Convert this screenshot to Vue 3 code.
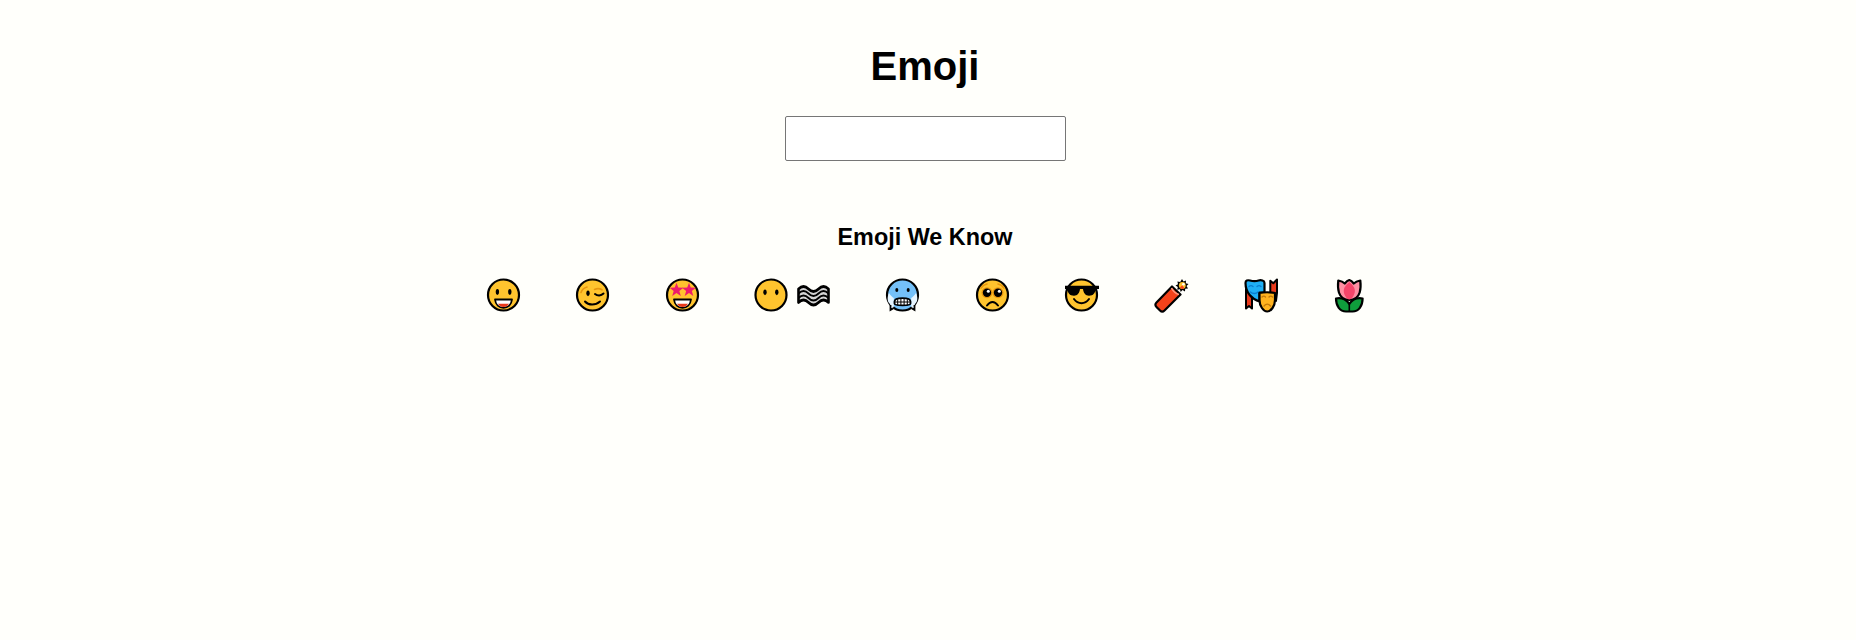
<script setup>
const title = 'Emoji'
const subtitle = 'Emoji We Know'
const star = '0,-7.3 1.76,-2.43 6.94,-2.26 2.85,.93 4.29,5.9 0,3 -4.29,5.9 -2.85,.93 -6.94,-2.26 -1.76,-2.43'
const wave = y => `M1.5 ${y} q5 -5 10 0 t10 0 t10 0`
</script>

<template>
  <div class="page">
    <h1>{{ title }}</h1>
    <input class="search" type="text" />
    <h2>{{ subtitle }}</h2>
    <ul class="emoji-list">
      <!-- grinning -->
      <li>
        <svg viewBox="0 0 34 34" class="icon">
          <circle cx="16.5" cy="16" r="15.5" fill="#ffc42e" stroke="#000" stroke-width="2.200" />
          <ellipse cx="10.400" cy="13" rx="1.700" ry="2.900" />
          <ellipse cx="22.800" cy="13" rx="1.700" ry="2.900" />
          <path d="M8 20.500h17c-.6 5.200-4 8.300-8.500 8.300S8.600 25.700 8 20.500z" fill="#fff" stroke="#000" stroke-width="1.800" stroke-linejoin="round" />
          <path d="M11 24.800h11c-1.300 2.200-3.200 3.200-5.500 3.200s-4.200-1-5.500-3.200z" fill="#ea3a1b" />
        </svg>
      </li>
      <!-- winking -->
      <li>
        <svg viewBox="0 0 34 34" class="icon">
          <circle cx="16.500" cy="16" r="15.500" fill="#ffc42e" stroke="#000" stroke-width="2.200" />
          <path d="M5 13.500c.8-2.500 3-4.700 6-5.500M18.500 10.500c2.500-1.200 5-1.200 7.500.3" fill="none" stroke="#e8960f" stroke-width="1.600" stroke-linecap="round" />
          <ellipse cx="12" cy="14.300" rx="1.700" ry="2.900" />
          <path d="M19 15c2.500 2 6 2 8.500-.5" fill="none" stroke="#000" stroke-width="2" stroke-linecap="round" />
          <path d="M9 22.500c3.500 4 10.500 4 15 0" fill="none" stroke="#000" stroke-width="2" stroke-linecap="round" />
        </svg>
      </li>
      <!-- star struck -->
      <li>
        <svg viewBox="0 0 34 34" class="icon">
          <circle cx="16.500" cy="16" r="15.500" fill="#ffc42e" stroke="#000" stroke-width="2.200" />
          <polygon :points="star" transform="translate(10.500 11)" fill="#ee1b6b" />
          <polygon :points="star" transform="translate(23 11)" fill="#ee1b6b" />
          <path d="M8 20.500h17c-.6 5.200-4 8.300-8.500 8.300S8.600 25.700 8 20.500z" fill="#fff" stroke="#000" stroke-width="1.800" stroke-linejoin="round" />
          <path d="M11 24.800h11c-1.300 2.200-3.200 3.200-5.500 3.200s-4.200-1-5.500-3.200z" fill="#ea3a1b" />
        </svg>
      </li>
      <!-- no mouth + fog -->
      <li class="pair">
        <svg viewBox="0 0 34 34" class="icon">
          <circle cx="16" cy="16" r="15.500" fill="#ffc42e" stroke="#000" stroke-width="2.200" />
          <ellipse cx="10" cy="13.300" rx="1.700" ry="2.900" />
          <ellipse cx="21.800" cy="13.300" rx="1.700" ry="2.900" />
        </svg>
        <svg viewBox="0 0 34 34" class="icon fog">
          <path d="M1.500 10q5-5 10 0t10 0t10 0V23.500q-5-5-10 0t-10 0t-10 0z" fill="#d4d4d4" stroke="#000" stroke-width="2.600" stroke-linejoin="round" />
          <path :d="wave(14.500)" fill="none" stroke="#000" stroke-width="1.800" />
          <path :d="wave(19)" fill="none" stroke="#000" stroke-width="1.800" />
        </svg>
      </li>
      <!-- cold face -->
      <li>
        <svg viewBox="0 0 34 34" class="icon">
          <circle cx="16.500" cy="16" r="15.500" fill="#74c0f8" stroke="#000" stroke-width="2.200" />
          <path d="M3 14c-2 4-1.800 9 1 11l1.300 4.500L7.800 28V19c-1.500-1-3.300-2.500-4.800-5zM30 14c2 4 1.800 9-1 11l-1.300 4.500L25.200 28V19c1.500-1 3.300-2.500 4.800-5z" fill="#e6f5ff" />
          <ellipse cx="10.800" cy="11" rx="1.500" ry="2" />
          <ellipse cx="22.200" cy="11" rx="1.500" ry="2" />
          <path d="M8.500 22.500c0-4.500 16-4.500 16 0v2c0 2.500-16 2.500-16 0z" fill="#fff" stroke="#000" stroke-width="1.800" />
          <path d="M11.700 20v6.500M14.900 19.500v7.500M18.100 19.500v7.500M21.300 20v6.500M8.500 23h16" stroke="#000" stroke-width="1" />
          <path d="M4.500 26v5l2.500-1.500M28.500 26v5L26 29.500" fill="none" stroke="#000" stroke-width="1.800" />
        </svg>
      </li>
      <!-- pleading -->
      <li>
        <svg viewBox="0 0 34 34" class="icon">
          <circle cx="16.500" cy="16" r="15.500" fill="#ffc42e" stroke="#000" stroke-width="2.200" />
          <path d="M5 9c1.500-2.300 3.500-3.500 6-4M22 5c2.500.5 4.500 1.700 6 4" fill="none" stroke="#e8960f" stroke-width="1.600" stroke-linecap="round" />
          <circle cx="11" cy="13.700" r="5.500" fill="#e8960f" />
          <circle cx="22" cy="13.700" r="5.500" fill="#e8960f" />
          <circle cx="11" cy="13.700" r="4.200" />
          <circle cx="22" cy="13.700" r="4.200" />
          <circle cx="12.300" cy="12.300" r="1.500" fill="#fff" />
          <circle cx="23.300" cy="12.300" r="1.500" fill="#fff" />
          <path d="M11 26.500c3.500-4.600 7.500-4.600 11 0" fill="none" stroke="#000" stroke-width="2" stroke-linecap="round" />
        </svg>
      </li>
      <!-- sunglasses -->
      <li>
        <svg viewBox="0 0 34 34" class="icon">
          <circle cx="16.500" cy="16" r="15.500" fill="#ffc42e" stroke="#000" stroke-width="2.200" />
          <path d="M0 6.700h34V10h-3.500c-.3 4-2 6.700-6.500 6.700-3.500 0-5.500-2.700-6-6.700h-3c-.5 4-2.500 6.700-6 6.700-4.500 0-6.200-2.700-6.500-6.700H0z" />
          <path d="M9 20c4 5.500 11 5.500 15 0" fill="none" stroke="#000" stroke-width="2" stroke-linecap="round" />
        </svg>
      </li>
      <!-- firecracker -->
      <li>
        <svg viewBox="0 0 34 34" class="icon">
          <path d="M17 7.500l8.500 8L9.500 31.500c-1.500 1.500-3 1.500-4.500 0L1.500 28c-1.500-1.500-1.500-3 0-4.500z" fill="#f5421a" stroke="#000" stroke-width="2.200" stroke-linejoin="round" />
          <path d="M16.500 9c1.500 3 4 5.500 7.500 6.500" fill="none" stroke="#ff9a80" stroke-width="1.600" />
          <path d="M27 0l1.500 2.500L31 1.500 30.800 4.300 33.500 5l-2 2 1.500 2.500-2.800.3L30 12.500l-2.500-1.500-1.800 2-.8-2.700-2.700.4.600-2.700-2.300-1.500 2.500-1.300-.6-2.700 2.800.5z" fill="#000" />
          <circle cx="27.300" cy="6.500" r="3.400" fill="#ffc42e" />
          <path d="M24.800 8.500a3.400 3.400 0 0 0 4.500 .8l-2-3z" fill="#f5421a" />
          <circle cx="28.400" cy="5.200" r="1.300" fill="#fff" />
        </svg>
      </li>
      <!-- performing arts -->
      <li>
        <svg viewBox="0 0 34 34" class="icon">
          <path d="M2 10v19.500l3-2.500 3 2.500V16z" fill="#ea3a1b" stroke="#000" stroke-width="2" stroke-linejoin="round" />
          <path d="M26.300 14V1.800l3 2.500 3.700-3.800V14l-1 8-3-2z" fill="#ea3a1b" stroke="#000" stroke-width="2" stroke-linejoin="round" />
          <path d="M1.500 4C1.500 1.500 3.500 .8 6 1.500c3 .9 6 .9 8.500 0C17 .8 20.500 1.500 20.500 4v9.500h-5V22.500C8.500 20.500 1.500 14 1.500 4z" fill="#1fb0f5" stroke="#000" stroke-width="2.200" stroke-linejoin="round" />
          <path d="M5 7.500c1.300-1.200 2.700-1.200 4 0M13 7.500c1.300-1.200 2.700-1.200 4 0M6.500 13c2 2 5.500 2 7.500 0" fill="none" stroke="#0c7fd0" stroke-width="1.300" stroke-linecap="round" />
          <path d="M15.500 14c5-1 10-1 15.500 0v7c0 6-4 11.500-7.800 11.500S15.500 27 15.500 21z" fill="#ffb31f" stroke="#000" stroke-width="2.200" stroke-linejoin="round" />
          <path d="M18 18c1-1.200 2.500-1.200 3.500 0M25 18c1-1.200 2.500-1.200 3.500 0M20 27c2-2.500 4.500-2.500 6.500 0" fill="none" stroke="#c47a0a" stroke-width="1.300" stroke-linecap="round" />
        </svg>
      </li>
      <!-- tulip -->
      <li>
        <svg viewBox="0 0 34 34" class="icon">
          <g transform="translate(1 0)">
            <path d="M14.300 25c-3-4.500-8-6.500-13.300-5.500C1 27 5 32.500 11 32.500h6.600c6 0 10-5.500 10-13-5.300-1-10.300 1-13.300 5.500z" fill="#0f9d3c" stroke="#000" stroke-width="2.200" stroke-linejoin="round" />
            <path d="M14.300 24v8" stroke="#000" stroke-width="1.600" />
            <path d="M3.300 1.500c3 .5 5 1.500 6.500 3C11 3 12.500 1.500 14.300 1c1.800.5 3.300 2 4.500 3.500 1.500-1.500 3.500-2.500 6.500-3 .7 6 1.300 19.500-11 19.500S2.600 7.500 3.300 1.500z" fill="#ff8fa3" stroke="#000" stroke-width="2.200" stroke-linejoin="round" />
            <path d="M14.300 3c3.500 3 6 6 5.500 10-.5 3-3 7.500-5.500 7.500s-5-4.500-5.500-7.500c-.5-4 2-7 5.500-10z" fill="#f5456a" />
          </g>
        </svg>
      </li>
    </ul>
  </div>
</template>

<style scoped>
.page {
  display: flex;
  flex-direction: column;
  align-items: center;
  padding: 44px 6px 0 0;
  font-family: "Liberation Sans", Arial, sans-serif;
  color: #000;
}
h1 {
  margin: 0 0 27px;
  font-size: 40px;
  font-weight: 700;
}
.search {
  width: 281px;
  height: 45px;
  box-sizing: border-box;
  padding: 0;
  background: #fff;
  border: 1px solid #767676;
  border-radius: 2px;
}
h2 {
  margin: 63px 0 28px;
  font-size: 23.4px;
  font-weight: 700;
}
.emoji-list {
  display: flex;
  justify-content: center;
  gap: 48px;
  margin: 0 0 0 4px;
  padding: 0;
  list-style: none;
}
.emoji-list li {
  display: flex;
}
.icon {
  display: block;
  width: 34px;
  height: 34px;
  margin: 0 3.75px;
  overflow: visible;
}
</style>

<style>
body {
  background: #fffffb;
}
</style>
